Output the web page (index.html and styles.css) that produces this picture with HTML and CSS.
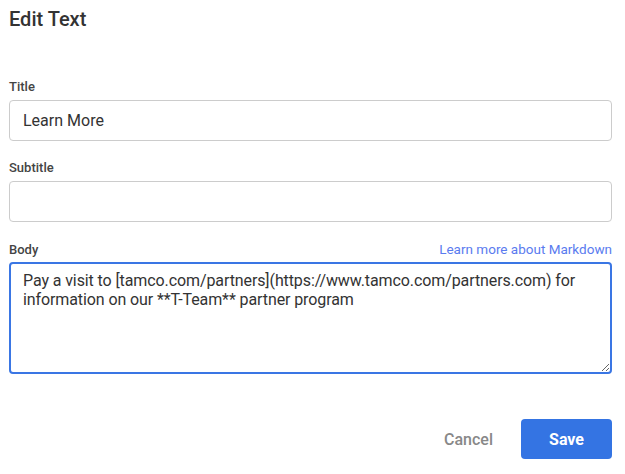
FILE: index.html
```html
<!DOCTYPE html>
<html lang="en">
<head>
<meta charset="utf-8">
<title>Edit Text</title>
<link rel="stylesheet" href="styles.css">
</head>
<body>
<div class="dialog">
  <h2 class="dialog-title">Edit Text</h2>
  <form class="form">
    <div class="field field-title">
      <div class="field-head"><label class="label" for="t">Title</label></div>
      <input class="input" id="t" type="text" value="Learn More">
    </div>
    <div class="field">
      <div class="field-head"><label class="label" for="s">Subtitle</label></div>
      <input class="input" id="s" type="text" value="">
    </div>
    <div class="field">
      <div class="field-head"><label class="label" for="b">Body</label><a class="help-link" href="#">Learn more about Markdown</a></div>
      <textarea class="textarea" id="b">Pay a visit to [tamco.com/partners](https://www.tamco.com/partners.com) for information on our **T-Team** partner program</textarea>
    </div>
    <div class="actions">
      <button type="button" class="btn btn-cancel">Cancel</button>
      <button type="button" class="btn btn-save">Save</button>
    </div>
  </form>
</div>
</body>
</html>
```
FILE: styles.css
```css
* { box-sizing: border-box; }
html, body { margin: 0; padding: 0; background: #fff; }
body {
  font-family: Roboto, "Liberation Sans", sans-serif;
  color: #333;
}
.dialog {
  width: 603px;
  margin-left: 9px;
  padding-top: 7px;
}
.dialog-title {
  margin: 0;
  font-size: 20px;
  line-height: 24px;
  font-weight: 500;
  color: #333;
}
.form {
  display: flex;
  flex-direction: column;
  margin-top: 48px;
}
.field { display: flex; flex-direction: column; }
.field + .field { margin-top: 19px; }
.field-head {
  display: flex;
  justify-content: space-between;
  align-items: baseline;
  height: 16px;
  margin-bottom: 5px;
}
.field:last-of-type .field-head { margin-bottom: 6px; }
.label {
  font-size: 13px;
  line-height: 16px;
  font-weight: 500;
  color: #444;
}
.help-link {
  font-size: 13.5px;
  line-height: 16px;
  color: #5a7bef;
  text-decoration: none;
}
.input {
  height: 41px;
  width: 100%;
  border: 1px solid #ccc;
  border-radius: 4px;
  padding: 0 13px;
  font-family: Roboto, "Liberation Sans", sans-serif;
  font-size: 16px;
  color: #333;
  background: #fff;
  outline: none;
}
.textarea {
  display: block;
  width: 100%;
  height: 112px;
  border: 2px solid #3a76e4;
  border-radius: 4px;
  padding: 7px 12px;
  font-family: Roboto, "Liberation Sans", sans-serif;
  font-size: 16px;
  line-height: normal;
  letter-spacing: -0.1px;
  color: #333;
  background: #fff;
  outline: none;
  resize: vertical;
}
.actions {
  display: flex;
  justify-content: flex-end;
  align-items: center;
  gap: 28px;
  margin-top: 45px;
}
.btn {
  font-family: Roboto, "Liberation Sans", sans-serif;
  font-size: 16px;
  font-weight: 500;
  border: none;
  background: none;
  cursor: pointer;
  padding: 0;
}
.btn-cancel { color: #888; }
.btn-save {
  width: 91px;
  height: 40px;
  border-radius: 4px;
  background: #3474e3;
  color: #fff;
  font-weight: 700;
}
```
